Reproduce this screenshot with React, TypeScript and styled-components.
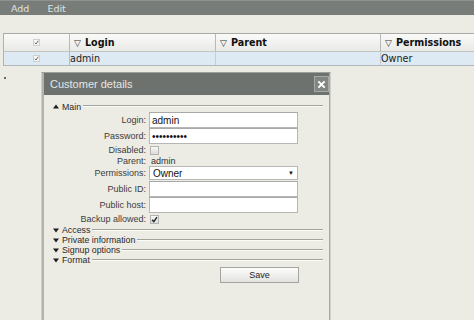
import React from 'react';
import styled, { createGlobalStyle } from 'styled-components';

const GlobalStyle = createGlobalStyle`
  html, body {
    margin: 0;
    padding: 0;
  }
  body {
    background: #ecebe4;
    font-family: "DejaVu Sans", Verdana, sans-serif;
    overflow: hidden;
  }
  * {
    box-sizing: border-box;
  }
`;

const columns = ['Login', 'Parent', 'Permissions'];

const mainFields = [
  { label: 'Login', kind: 'text', value: 'admin', h: 16 },
  { label: 'Password', kind: 'password', value: 'xxxxxxxxxx', h: 16 },
  { label: 'Disabled', kind: 'check', checked: false, h: 12 },
  { label: 'Parent', kind: 'static', value: 'admin', h: 10 },
  { label: 'Permissions', kind: 'select', value: 'Owner', h: 14 },
  { label: 'Public ID', kind: 'text', value: '', h: 17 },
  { label: 'Public host', kind: 'text', value: '', h: 16 },
  { label: 'Backup allowed', kind: 'check', checked: true, h: 12 },
];

const sections = ['Access', 'Private information', 'Signup options', 'Format'];

const CheckMark = ({ size = 7, color = '#444' }: { size?: number; color?: string }) => (
  <svg width={size} height={size} viewBox="0 0 10 10">
    <path d="M1.5 5.5 L4 8 L8.5 1.5" fill="none" stroke={color} strokeWidth="2" />
  </svg>
);

// small solid triangle used by the collapsible sections
const Tri = ({ up }: { up?: boolean }) => (
  <svg width="6" height="5" viewBox="0 0 6 5">
    <path d={up ? 'M0 4.5 L3 0.5 L6 4.5 Z' : 'M0 0.5 L6 0.5 L3 4.5 Z'} fill="#1e1e1e" />
  </svg>
);

const App = () => {
  return (
    <Page>
      <GlobalStyle />
      <Toolbar>
        <ToolItem>Add</ToolItem>
        <ToolItem>Edit</ToolItem>
      </Toolbar>

      <Grid>
        <HeadRow>
          <Cell $center>
            <TinyBox>
              <CheckMark size={5} color="#666" />
            </TinyBox>
          </Cell>
          {columns.map((c) => (
            <HeadCell key={c}>
              <Sort>▽</Sort>
              {c}
            </HeadCell>
          ))}
        </HeadRow>
        <DataRow>
          <Cell $center>
            <TinyBox>
              <CheckMark size={5} color="#666" />
            </TinyBox>
          </Cell>
          <DataCell>admin</DataCell>
          <DataCell></DataCell>
          <DataCell>Owner</DataCell>
        </DataRow>
      </Grid>

      <Marker />

      <Dialog>
        <Frame>
          <TitleBar>
            <Title>Customer details</Title>
            <CloseButton>
              <svg width="9" height="9" viewBox="0 0 10 10">
                <path d="M1.5 1.5 L8.5 8.5 M8.5 1.5 L1.5 8.5" stroke="#fff" strokeWidth="2.2" />
              </svg>
            </CloseButton>
          </TitleBar>

          <Body>
            <SectionRow $h={11}>
              <Arrow>
                <Tri up />
              </Arrow>
              <SectionName>Main</SectionName>
              <Rule />
            </SectionRow>

            {mainFields.map((f) => (
              <FieldRow key={f.label} $h={f.h}>
                <Label>{f.label}:</Label>
                {f.kind === 'text' && <TextInput type="text" value={f.value} readOnly />}
                {f.kind === 'password' && <TextInput type="password" value={f.value} readOnly />}
                {f.kind === 'check' && (
                  <Check>{f.checked && <CheckMark size={7} color="#222" />}</Check>
                )}
                {f.kind === 'static' && <StaticValue>{f.value}</StaticValue>}
                {f.kind === 'select' && (
                  <SelectBox>
                    <span>{f.value}</span>
                    <SelectArrow>▼</SelectArrow>
                  </SelectBox>
                )}
              </FieldRow>
            ))}

            {sections.map((s) => (
              <SectionRow key={s} $h={10}>
                <Arrow>
                  <Tri />
                </Arrow>
                <SectionName>{s}</SectionName>
                <Rule />
              </SectionRow>
            ))}

            <ButtonRow>
              <SaveButton>Save</SaveButton>
            </ButtonRow>
          </Body>
        </Frame>
      </Dialog>
    </Page>
  );
};

export default App;

const Page = styled.div`
  position: relative;
  width: 474px;
  height: 320px;
  overflow: hidden;
`;

const Toolbar = styled.div`
  height: 15px;
  border-top: 1px solid #8e928e;
  background: #797d79;
  display: flex;
  align-items: center;
  gap: 18px;
  padding-left: 11px;
`;

const ToolItem = styled.span`
  font-size: 9.5px;
  color: #e0e2e0;
`;

const Grid = styled.div`
  margin: 18px 0 0 3px;
  width: 480px;
  border-left: 1px solid #b0b0ae;
  border-top: 1px solid #a9a9a7;
`;

const HeadRow = styled.div`
  display: grid;
  grid-template-columns: 66px 146px 165px 1fr;
  height: 18px;
  background: linear-gradient(#fafaf9, #e9e9e6);
  border-bottom: 1px solid #c4c4c2;
`;

const DataRow = styled.div`
  display: grid;
  grid-template-columns: 66px 146px 165px 1fr;
  height: 14px;
  background: #dde9f3;
  border-bottom: 1px solid #b3b8bc;
`;

const Cell = styled.div<{ $center?: boolean }>`
  border-right: 1px solid #b8b8b6;
  display: flex;
  align-items: center;
  justify-content: ${(p) => (p.$center ? 'center' : 'flex-start')};
`;

const HeadCell = styled(Cell)`
  padding-left: 4px;
  font-size: 9.6px;
  font-weight: bold;
  color: #111;
`;

const Sort = styled.span`
  font-weight: normal;
  font-size: 9px;
  margin-right: 4px;
  color: #333;
`;

const DataCell = styled(Cell)`
  padding-left: 0;
  font-size: 9.6px;
  color: #222;
  border-right-color: #c8cdd1;
`;

const TinyBox = styled.span`
  width: 7px;
  height: 7px;
  border: 1px solid #cfcfcd;
  background: #f6f6f4;
  display: inline-flex;
  align-items: center;
  justify-content: center;
`;

const Marker = styled.div`
  margin: 11px 0 0 4px;
  width: 2px;
  height: 2px;
  background: #6a6a68;
`;

const Dialog = styled.div`
  position: absolute;
  left: 41px;
  top: 72px;
  width: 290px;
  height: 270px;
  border: 1px solid #cfcfca;
  border-top-color: #9d9f9c;
`;

const Frame = styled.div`
  height: 100%;
  border-left: 2px solid #b1b1ad;
  border-right: 1px solid #a9a9a5;
  background: #ecebe4;
`;

const TitleBar = styled.div`
  height: 22px;
  background: #6d726e;
  display: flex;
  align-items: center;
  justify-content: space-between;
  padding: 0 0 0 6px;
`;

const Title = styled.span`
  font-family: "Liberation Sans", Arial, sans-serif;
  font-size: 11px;
  color: #e4e6e4;
`;

const CloseButton = styled.span`
  width: 15px;
  height: 16px;
  border: 1px solid #a6a9a6;
  background: #828682;
  display: flex;
  align-items: center;
  justify-content: center;
`;

const Body = styled.div`
  padding: 6px 6px 0 8px;
  font-family: "Liberation Sans", Arial, sans-serif;
  color: #333;
`;

const SectionRow = styled.div<{ $h: number }>`
  height: ${(p) => p.$h}px;
  display: flex;
  align-items: center;
`;

const Arrow = styled.span`
  width: 10px;
  padding-left: 1px;
  display: flex;
  align-items: center;
`;

const SectionName = styled.span`
  font-size: 8.8px;
  color: #2a2a2a;
  margin-right: 2px;
`;

const Rule = styled.span`
  flex: 1;
  height: 2px;
  border-top: 1px solid #a3a3a0;
  border-bottom: 1px solid #fbfbf8;
  margin-top: -1px;
`;

const FieldRow = styled.div<{ $h: number }>`
  height: ${(p) => p.$h}px;
  display: grid;
  grid-template-columns: 94px 149px;
  column-gap: 3px;
  align-items: center;
`;

const Label = styled.span`
  text-align: right;
  font-size: 9px;
  color: #3c3c3c;
`;

const TextInput = styled.input`
  width: 149px;
  height: 16px;
  margin: 0;
  border: 1px solid #b6b6b4;
  border-top-color: #a9a9a7;
  background: #fff;
  padding: 0 0 0 2px;
  font-family: "Liberation Sans", Arial, sans-serif;
  font-size: 10px;
  color: #111;
  outline: none;
`;

const Check = styled.span`
  width: 9px;
  height: 9px;
  margin-left: 1px;
  border: 1px solid #b3b3b1;
  background: linear-gradient(#f7f7f6, #dcdcda);
  display: flex;
  align-items: center;
  justify-content: center;
`;

const StaticValue = styled.span`
  font-size: 9px;
  color: #333;
  padding-left: 2px;
`;

const SelectBox = styled.div`
  height: 14px;
  border: 1px solid #b6b6b4;
  background: #fff;
  display: flex;
  align-items: center;
  justify-content: space-between;
  padding: 0 3px 0 3px;
  font-size: 10px;
  color: #111;
`;

const SelectArrow = styled.span`
  font-size: 6px;
  color: #111;
`;

const ButtonRow = styled.div`
  width: 247px;
  display: flex;
  justify-content: flex-end;
  margin-top: 2px;
`;

const SaveButton = styled.div`
  width: 79px;
  height: 16px;
  border: 1px solid #a4a4a2;
  background: linear-gradient(#fdfdfc, #e2e2df);
  display: flex;
  align-items: center;
  justify-content: center;
  font-size: 9px;
  color: #222;
`;
